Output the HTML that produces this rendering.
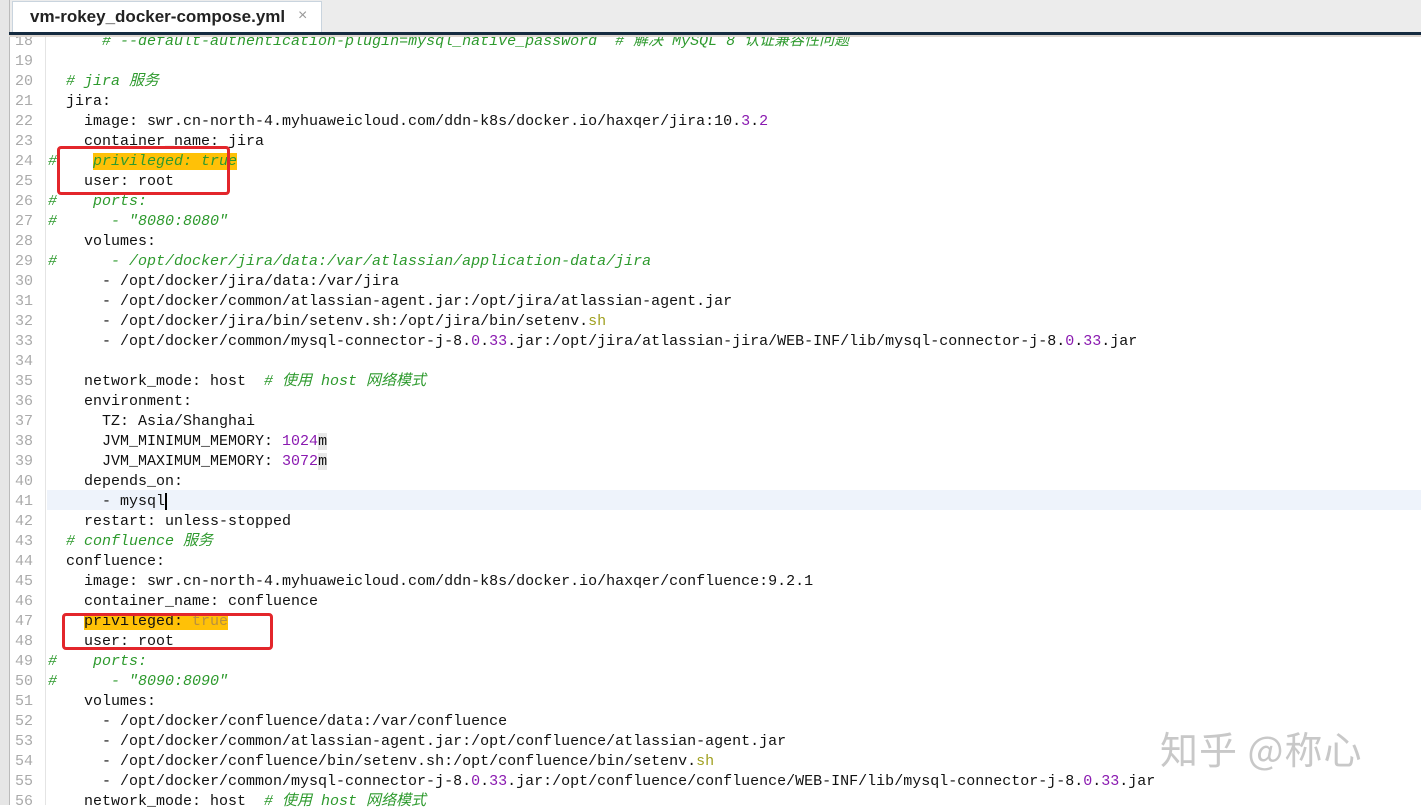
<!DOCTYPE html>
<html><head><meta charset="utf-8"><style>
body{margin:0;width:1421px;height:805px;overflow:hidden;background:#fff;position:relative;font-family:"Liberation Mono","Noto Sans CJK SC",monospace;}
.tabbar{position:absolute;left:0;top:0;width:1421px;height:32px;background:#ececec;}
.tab{position:absolute;left:12px;top:1px;width:310px;height:31px;background:#fff;border:1px solid #c9d4de;border-bottom:none;box-sizing:border-box;}
.tab .t{position:absolute;left:17px;top:5px;font:bold 17px "Liberation Sans",sans-serif;color:#222;}
.tab .x{position:absolute;left:285px;top:5px;font:16px "Liberation Sans",sans-serif;color:#999;}
.dark{position:absolute;left:9px;top:32px;width:1412px;height:3px;background:#152b40;}
.under{position:absolute;left:9px;top:35px;width:1412px;height:2px;background:#ddd6d0;}
.strip{position:absolute;left:0;top:0;width:9px;height:805px;background:#e6e6e6;border-right:1px solid #bbb;}
.sep{position:absolute;left:45px;top:37px;width:1px;height:768px;background:#e4e4e4;}
.ln{position:absolute;left:15px;width:22px;font-size:15px;color:#aaa;line-height:20px;}
.c{position:absolute;left:48px;font-size:15px;color:#111;line-height:20px;white-space:pre;}
.cm{color:#2e9a2e;font-style:italic}
.n{color:#8a1ab0}
.hl{background:#ffc107}
.box{position:absolute;border:3px solid #e3262b;border-radius:4px;box-sizing:border-box;}
.wm{position:absolute;left:1160px;top:720px;font:38px "Noto Sans CJK SC",sans-serif;color:#c8c8c8;letter-spacing:1px;}
</style></head><body>
<div class="tabbar"><div class="tab"><span class="t">vm-rokey_docker-compose.yml</span><span class="x">×</span></div></div>
<div class="strip"></div>
<div style="position:absolute;left:47px;top:490px;width:1374px;height:20px;background:#eef3fb"></div>
<div class="sep"></div>
<div id="code"></div>
<div class="dark"></div><div class="under"></div>
<div class="box" style="left:57px;top:146px;width:173px;height:49px"></div>
<div class="box" style="left:62px;top:613px;width:211px;height:37px"></div>
<div class="wm">知乎 @称心</div>
<script>
var L={
18:'      <span class="cm"># --default-authentication-plugin=mysql_native_password  # 解决 MySQL 8 认证兼容性问题</span>',
19:'',
20:'  <span class="cm"># jira 服务</span>',
21:'  jira:',
22:'    image: swr.cn-north-4.myhuaweicloud.com/ddn-k8s/docker.io/haxqer/jira:10.<span class="n">3</span>.<span class="n">2</span>',
23:'    container_name: jira',
24:'<span class="cm">#    <span class="hl">privileged: true</span></span>',
25:'    user: root',
26:'<span class="cm">#    ports:</span>',
27:'<span class="cm">#      - "8080:8080"</span>',
28:'    volumes:',
29:'<span class="cm">#      - /opt/docker/jira/data:/var/atlassian/application-data/jira</span>',
30:'      - /opt/docker/jira/data:/var/jira',
31:'      - /opt/docker/common/atlassian-agent.jar:/opt/jira/atlassian-agent.jar',
32:'      - /opt/docker/jira/bin/setenv.sh:/opt/jira/bin/setenv.<span style="color:#a0a020">sh</span>',
33:'      - /opt/docker/common/mysql-connector-j-8.<span class="n">0</span>.<span class="n">33</span>.jar:/opt/jira/atlassian-jira/WEB-INF/lib/mysql-connector-j-8.<span class="n">0</span>.<span class="n">33</span>.jar',
34:'',
35:'    network_mode: host  <span class="cm"># 使用 host 网络模式</span>',
36:'    environment:',
37:'      TZ: Asia/Shanghai',
38:'      JVM_MINIMUM_MEMORY: <span class="n">1024</span><span style="background:#e8e8e8">m</span>',
39:'      JVM_MAXIMUM_MEMORY: <span class="n">3072</span><span style="background:#e8e8e8">m</span>',
40:'    depends_on:',
41:'      - mysql<span style="border-left:2px solid #000"></span>',
42:'    restart: unless-stopped',
43:'  <span class="cm"># confluence 服务</span>',
44:'  confluence:',
45:'    image: swr.cn-north-4.myhuaweicloud.com/ddn-k8s/docker.io/haxqer/confluence:9.2.1',
46:'    container_name: confluence',
47:'    <span class="hl">privileged: <span style="color:#b89040">true</span></span>',
48:'    user: root',
49:'<span class="cm">#    ports:</span>',
50:'<span class="cm">#      - "8090:8090"</span>',
51:'    volumes:',
52:'      - /opt/docker/confluence/data:/var/confluence',
53:'      - /opt/docker/common/atlassian-agent.jar:/opt/confluence/atlassian-agent.jar',
54:'      - /opt/docker/confluence/bin/setenv.sh:/opt/confluence/bin/setenv.<span style="color:#a0a020">sh</span>',
55:'      - /opt/docker/common/mysql-connector-j-8.<span class="n">0</span>.<span class="n">33</span>.jar:/opt/confluence/confluence/WEB-INF/lib/mysql-connector-j-8.<span class="n">0</span>.<span class="n">33</span>.jar',
56:'    network_mode: host  <span class="cm"># 使用 host 网络模式</span>'
};
var h='';
for(var n=18;n<=56;n++){var t=32+(n-18)*20;h+='<div class="ln" style="top:'+t+'px">'+n+'</div><div class="c" style="top:'+t+'px">'+L[n]+'</div>';}
document.getElementById('code').innerHTML=h;
</script>
</body></html>
